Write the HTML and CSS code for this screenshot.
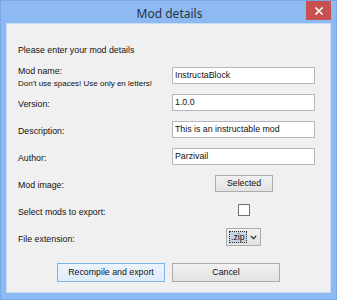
FILE: index.html
```html
<!DOCTYPE html>
<html>
<head>
<meta charset="utf-8">
<link rel="stylesheet" href="styles.css">
</head>
<body>
<div class="window">
  <div class="titlebar">
    <span></span>
    <span class="title">Mod details</span>
    <div class="close">
      <svg width="8" height="8" viewBox="0 0 8 8"><path d="M1 1 L7 7 M7 1 L1 7" stroke="#fff" stroke-width="1.6" stroke-linecap="square"/></svg>
    </div>
  </div>
  <div class="client">
    <p class="intro">Please enter your mod details</p>
    <div class="form">
      <div class="label first">Mod name:<span class="hint">Don't use spaces! Use only en letters!</span></div>
      <div class="ctrl"><div class="input">InstructaBlock</div></div>

      <div class="label">Version:</div>
      <div class="ctrl"><div class="input">1.0.0</div></div>

      <div class="label">Description:</div>
      <div class="ctrl"><div class="input">This is an instructable mod</div></div>

      <div class="label">Author:</div>
      <div class="ctrl"><div class="input">Parzivail</div></div>

      <div class="label">Mod image:</div>
      <div class="ctrl center"><div class="btn small">Selected</div></div>

      <div class="label">Select mods to export:</div>
      <div class="ctrl center"><div class="check"></div></div>

      <div class="label">File extension:</div>
      <div class="ctrl center">
        <div class="combo">
          <span class="value">.zip</span>
          <svg class="chev" width="7" height="5" viewBox="0 0 7 5"><path d="M0.8 1 L3.5 3.7 L6.2 1" fill="none" stroke="#333" stroke-width="1.3"/></svg>
        </div>
      </div>
    </div>
    <div class="actions">
      <div class="btn wide default">Recompile and export</div>
      <div class="btn wide">Cancel</div>
    </div>
  </div>
</div>
</body>
</html>
```
FILE: styles.css
```css
* { box-sizing: border-box; }
html, body { margin: 0; padding: 0; }
body {
  width: 337px;
  height: 300px;
  overflow: hidden;
  font-family: "Liberation Sans", Arial, sans-serif;
}
.window {
  width: 337px;
  height: 300px;
  background: #8dbaf3;
  border: 1px solid #7aa8e6;
  padding: 0 5px 0 5px;
  display: flex;
  flex-direction: column;
}
.titlebar {
  height: 22px;
  display: grid;
  grid-template-columns: 1fr auto 1fr;
  align-items: start;
}
.title {
  font-family: "Noto Sans", "Open Sans", sans-serif;
  font-size: 12px;
  color: #2a3340;
  line-height: 16px;
  padding-top: 5px;
  padding-left: 2px;
}
.close {
  justify-self: end;
  width: 25px;
  height: 19px;
  background: #c75050;
  display: flex;
  align-items: center;
  justify-content: center;
}
.close svg { display: block; }
.client {
  width: 325px;
  height: 270px;
  background: #f0f0f0;
  border: 1px solid #c9dcf6;
  padding: 20px 16px 0 11px;
  font-size: 8.8px;
  color: #111;
}
.intro {
  margin: 0;
  line-height: 13px;
  height: 13px;
}
.form {
  margin-top: 10px;
  display: grid;
  grid-template-columns: 154px 143px;
  grid-auto-rows: 27px;
}
.label {
  line-height: 13px;
  padding-top: 3.5px;
  white-space: nowrap;
}
.label.first { padding-top: 0; margin-top: -2px; }
.hint {
  display: block;
  font-size: 8px;
  line-height: 11px;
}
.ctrl { display: flex; align-items: flex-start; }
.ctrl.center { justify-content: center; }
.input {
  width: 143px;
  height: 17px;
  background: #fff;
  border: 1px solid #b5b7bd;
  padding-left: 2px;
  line-height: 15px;
  white-space: nowrap;
  overflow: hidden;
}
.btn {
  height: 17px;
  border: 1px solid #acacac;
  background: linear-gradient(#f1f1f1, #e2e2e2);
  display: flex;
  align-items: center;
  justify-content: center;
  line-height: 13px;
  white-space: nowrap;
}
.btn.small { width: 58px; margin-left: 1px; }
.check {
  width: 12px;
  height: 12px;
  margin-top: 2px;
  background: #fff;
  border: 1px solid #707070;
}
.combo {
  margin-top: -1px;
  width: 35px;
  height: 18px;
  border: 1px solid #acacac;
  background: linear-gradient(#f1f1f1, #e2e2e2);
  display: flex;
  align-items: center;
  padding: 2px;
  gap: 3px;
}
.combo .value {
  height: 12px;
  line-height: 11px;
  padding: 0 1px;
  border: 1px dotted #333;
  background: #c5d4e4;
}
.chev { display: block; }
.actions {
  margin-top: 7px;
  margin-left: 39px;
  display: flex;
  gap: 7px;
}
.btn.wide { width: 108px; height: 19px; }
.btn.default {
  border-color: #7eb4ea;
  background: linear-gradient(#ecf4fc, #dcecfc);
}
```
